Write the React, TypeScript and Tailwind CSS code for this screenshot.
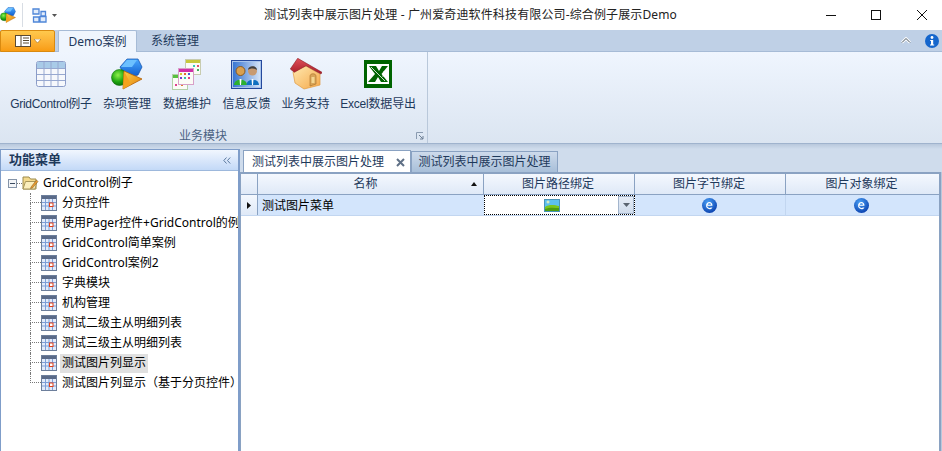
import { ReactNode } from "react";

const treeItems = [
  "分页控件",
  "使用Pager控件+GridControl的例子",
  "GridControl简单案例",
  "GridControl案例2",
  "字典模块",
  "机构管理",
  "测试二级主从明细列表",
  "测试三级主从明细列表",
  "测试图片列显示",
  "测试图片列显示（基于分页控件）",
];

const ShapesIcon = ({ size }: { size: number }) => (
  <svg width={size} height={size} viewBox="0 0 32 32">
    <defs>
      <linearGradient id="shapeBlue" x1="0" y1="0" x2="0" y2="1">
        <stop offset="0" stopColor="#4aa8ff" />
        <stop offset="1" stopColor="#0a55c8" />
      </linearGradient>
      <radialGradient id="shapeGreen" cx="0.4" cy="0.35" r="0.7">
        <stop offset="0" stopColor="#8ef04a" />
        <stop offset="0.6" stopColor="#1da510" />
        <stop offset="1" stopColor="#0a6a08" />
      </radialGradient>
      <linearGradient id="shapeOrange" x1="0" y1="0" x2="1" y2="1">
        <stop offset="0" stopColor="#ffd34a" />
        <stop offset="1" stopColor="#e07a08" />
      </linearGradient>
    </defs>
    <path d="M9 9 L16 1 L27 1 L31 9 L27 17 L15 20 Z" fill="url(#shapeBlue)" stroke="#0b4aa8" strokeWidth="0.7" />
    <path d="M10 9 L16 2 L26 2 L21 9 Z" fill="#6cc0ff" />
    <circle cx="8.5" cy="19.5" r="8" fill="url(#shapeGreen)" stroke="#0f6f0c" strokeWidth="0.6" />
    <path d="M13 13 L31 21 L12 31 Z" fill="url(#shapeOrange)" stroke="#b25f06" strokeWidth="0.8" />
    <path d="M13 13 L20 26.5 L12 31 Z" fill="#f3a21f" />
  </svg>
);

const GridIcon = () => (
  <svg width="30" height="27" viewBox="0 0 30 27">
    <rect x="0.5" y="0.5" width="29" height="25" rx="2" fill="#f6f8fc" stroke="#8b9cc8" />
    <rect x="1" y="1" width="28" height="6" fill="#a9cbe8" />
    <path d="M1 7.5H29M1 13.5H29M1 19.5H29M8 1V25M15 1V25M22 1V25" stroke="#97a8d0" fill="none" />
  </svg>
);

const MaintainIcon = () => {
  const card = (x: number, y: number, head: string, border: string, w: number, h: number) => (
    <g>
      <rect x={x + 0.5} y={y + 0.5} width={w} height={h} fill="#fbfcf6" stroke={border} />
      <rect x={x + 1} y={y + 1} width={w - 1} height="3" fill={head} />
    </g>
  );
  return (
    <svg width="30" height="31" viewBox="0 0 30 31">
      {card(13, 0, "#c8c83c", "#c8ccb0", 15, 15)}
      <rect x="21" y="6" width="2" height="2" fill="#34c8b4" />
      <rect x="25" y="6" width="2" height="2" fill="#e0506a" />
      <rect x="25" y="10" width="2" height="2" fill="#40b060" />
      {card(0, 15, "#58c040", "#b4d0a8", 15, 15)}
      <rect x="3" y="25" width="2" height="2" fill="#e04090" />
      <rect x="9" y="25" width="2" height="2" fill="#e08030" />
      {card(6, 9, "#d030a8", "#d8a0c8", 15, 16)}
      <rect x="8" y="14" width="2" height="2" fill="#d8c830" />
      <rect x="12" y="14" width="2" height="2" fill="#e07030" />
      <rect x="16" y="14" width="2" height="2" fill="#4060d8" />
      <rect x="8" y="18" width="2" height="2" fill="#7040d0" />
      <rect x="12" y="18" width="2" height="2" fill="#30c0b0" />
      <rect x="16" y="18" width="2" height="2" fill="#e04080" />
    </svg>
  );
};

const PeopleIcon = () => (
  <svg width="31" height="29" viewBox="0 0 31 29">
    <defs>
      <linearGradient id="peopleBg" x1="0" y1="0" x2="1" y2="0">
        <stop offset="0" stopColor="#2f6fd0" />
        <stop offset="1" stopColor="#dbe8f8" />
      </linearGradient>
    </defs>
    <rect x="0.5" y="0.5" width="30" height="28" fill="url(#peopleBg)" stroke="#24489c" />
    <rect x="1.5" y="1.5" width="28" height="26" fill="none" stroke="#a8c4ec" />
    <circle cx="9.5" cy="11" r="4.5" fill="#d9a050" stroke="#8a5a20" strokeWidth="1" />
    <path d="M3 25 C3 18 16 18 16 25 Z" fill="#2cb030" />
    <path d="M8.5 19 L10.5 19 L10 25 L9 25 Z" fill="#fff" />
    <circle cx="21.5" cy="11" r="4.5" fill="#c89a70" />
    <path d="M17 10 C17 5 26 5 26 10 C24 8 19 8 17 10 Z" fill="#404040" />
    <path d="M15.5 25 C15.5 18 28 18 28 25 Z" fill="#1070c0" />
    <path d="M20.5 19 L22.5 19 L22 25 L21 25 Z" fill="#fff" />
  </svg>
);

const HouseIcon = () => (
  <svg width="32" height="32" viewBox="0 0 32 32">
    <defs>
      <linearGradient id="houseWall" x1="0" y1="0" x2="1" y2="1">
        <stop offset="0" stopColor="#ffe9b0" />
        <stop offset="1" stopColor="#f5a84a" />
      </linearGradient>
      <linearGradient id="houseRoof" x1="0" y1="0" x2="0" y2="1">
        <stop offset="0" stopColor="#e0505a" />
        <stop offset="1" stopColor="#a81c28" />
      </linearGradient>
    </defs>
    <path d="M3 14 L16 8 L30 16 L30 27 L14 31 L5 25 Z" fill="url(#houseWall)" stroke="#e09a40" strokeWidth="0.7" />
    <path d="M7.7 0.3 L0.3 11 L4.3 14.3 L16 7.7 L31 16 L32 14.3 Z" fill="url(#houseRoof)" stroke="#8c1c24" strokeWidth="0.6" />
    <path d="M20 18 C20 15 26 15 26 18 L26 26 L20 28 Z" fill="#d8a458" stroke="#a87028" strokeWidth="0.6" />
    <rect x="21.5" y="19" width="3" height="6" fill="#f4d690" />
  </svg>
);

const ExcelIcon = () => (
  <svg width="28" height="28" viewBox="0 0 28 28">
    <rect width="28" height="28" fill="#006400" />
    <rect x="3" y="4" width="22" height="20" fill="#fff" />
    <path d="M5 6 H12 L15 11 L18 6 H24 L17.5 14 L24 22 H17 L14 17 L11 22 H4 L11 14 Z" fill="#006400" />
    <path d="M7 7 L21 21" stroke="#fff" strokeWidth="0.8" />
    <path d="M19 12H25M18 16H25" stroke="#fff" strokeWidth="0.8" />
  </svg>
);

const NodeIcon = () => (
  <svg width="16" height="16" viewBox="0 0 16 16" className="shrink-0">
    <rect x="0.5" y="0.5" width="15" height="15" fill="#e3ebfa" stroke="#6d7f9c" />
    <rect x="1" y="1" width="14" height="3" fill="#5a6a88" />
    <path d="M1 7.5H15M1 11H15M4.5 4V15M8 4V15M11.5 4V15" stroke="#7d9fd8" fill="none" />
    <rect x="8.5" y="8" width="3.5" height="3.5" fill="#fff" stroke="#e0401c" />
  </svg>
);

const FolderIcon = () => (
  <svg width="17" height="16" viewBox="0 0 17 16" className="shrink-0">
    <path d="M1 2 H7 L8.5 4 H14 V14 H1 Z" fill="#f3d98c" stroke="#9c8a4c" />
    <path d="M1 14 L3.5 6.5 H15 L13 14 Z" fill="#fbeebc" stroke="#a8965a" />
    <path d="M9 12 L14.5 5 L16 6.5 L10.5 13 L8.5 13.5 Z" fill="#e89a30" stroke="#7c5a20" strokeWidth="0.5" />
  </svg>
);

const PictureIcon = () => (
  <svg width="16" height="13" viewBox="0 0 16 13">
    <rect x="0.5" y="0.5" width="15" height="12" fill="#5cc0ee" stroke="#4a94b8" />
    <path d="M1 8 C5 5 11 6 15 7 V12 H1 Z" fill="#7cc61c" />
    <path d="M1 10 C6 8 11 9 15 9 V12 H1 Z" fill="#4c9c10" />
    <path d="M4 1.5V4.5M2.5 3H5.5" stroke="#fff8b0" strokeWidth="1" />
  </svg>
);

const IeIcon = () => (
  <svg width="15" height="15" viewBox="0 0 15 15">
    <defs>
      <radialGradient id="ieBall" cx="0.4" cy="0.3" r="0.8">
        <stop offset="0" stopColor="#4aa0f5" />
        <stop offset="1" stopColor="#0438a8" />
      </radialGradient>
    </defs>
    <circle cx="7.5" cy="7.5" r="7.5" fill="url(#ieBall)" />
    <path d="M4.5 7.8 H10.5 C10.6 5.2 9 4 7.5 4 C5.6 4 4 5.6 4 7.6 C4 9.7 5.6 11.2 7.6 11.2 C9 11.2 10 10.5 10.4 9.4 H8.6 C8.3 9.8 8 10 7.5 10 C6.5 10 5.8 9.4 5.7 8.8 Z M5.8 6.7 C6 5.8 6.7 5.3 7.4 5.3 C8.2 5.3 8.8 5.8 8.9 6.7 Z" fill="#fff" fillRule="evenodd" />
  </svg>
);

const RibbonButton = ({ icon, label, width }: { icon: ReactNode; label: string; width: string }) => (
  <div className={`flex flex-col items-center ${width}`}>
    <div className="flex h-[34px] items-center justify-center">{icon}</div>
    <span className="mt-[4px] whitespace-nowrap font-['Liberation_Sans','Noto_Sans_CJK_SC',sans-serif] leading-[18px]">{label}</span>
  </div>
);

const Connector = ({ last }: { last: boolean }) => (
  <div className="flex h-5 w-[11px] shrink-0 flex-col">
    <div className="h-[10px] border-b border-l border-dotted border-[#777]" />
    {!last && <div className="flex-1 border-l border-dotted border-[#777]" />}
  </div>
);

export default function App() {
  return (
    <div className="flex h-[451px] w-[942px] flex-col overflow-hidden bg-white font-['Noto_Sans','Noto_Sans_CJK_SC',sans-serif] text-[12px] text-[#1e395b]">
      {/* title bar */}
      <div className="flex h-[30px] shrink-0 items-center bg-white text-[#222]">
        <div className="flex w-[60px] shrink-0 items-center">
          <ShapesIcon size={16} />
          <div className="ml-[6px] h-[24px] w-px bg-[#d8dde4]" />
          <svg width="15" height="15" viewBox="0 0 15 15" className="ml-[9px]">
            <path d="M1 1H7V6H1Z M9 3.5H13.5V8H9Z M8 8.5H14V14H8Z M1.5 9H7V14H1.5Z" fill="#e3edfb" stroke="#4f86d8" strokeWidth="1.3" />
          </svg>
          <svg width="5" height="3" viewBox="0 0 5 3" className="ml-[5px]">
            <path d="M0 0H5L2.5 3Z" fill="#555" />
          </svg>
        </div>
        <div className="flex-1 pl-[62px] text-center tracking-[0.13px]">测试列表中展示图片处理 - 广州爱奇迪软件科技有限公司-综合例子展示Demo</div>
        <div className="flex w-[123px] shrink-0 items-center">
          <svg width="123" height="12" viewBox="0 0 123 12">
            <path d="M7 6.5H17" stroke="#111" />
            <rect x="52.5" y="1.5" width="9" height="9" fill="none" stroke="#111" />
            <path d="M98 1L108 11M108 1L98 11" stroke="#111" />
          </svg>
        </div>
      </div>

      {/* ribbon tabs */}
      <div className="flex h-[22px] shrink-0 items-end border-b border-[#a6bbd6] bg-[#bfd0e6]">
        <div className="mb-[-1px] flex h-[22px] w-[55px] items-center justify-center gap-[2px] rounded-t-[2px] border border-[#d98a10] bg-gradient-to-b from-[#ffc94d] to-[#f89c12]">
          <svg width="17" height="12" viewBox="0 0 17 12">
            <rect x="0.5" y="0.5" width="15" height="11" fill="#fff" stroke="#5c4a30" />
            <path d="M6 0.5V11.5" stroke="#5c4a30" />
            <path d="M8 3H14M8 5.5H14M8 8H14" stroke="#5c4a30" />
          </svg>
          <svg width="7" height="4" viewBox="0 0 7 4">
            <path d="M0 0H7L3.5 4Z" fill="#fff" stroke="#8a5a10" strokeWidth="0.5" />
          </svg>
        </div>
        <div className="mb-[-1px] ml-[3px] flex h-[22px] w-[79px] items-center justify-center rounded-t-[2px] border border-b-0 border-[#a6bbd6] bg-[#eff5fd]">Demo案例</div>
        <div className="flex h-[21px] items-center pl-[14px]">系统管理</div>
        <div className="flex-1" />
        <div className="flex items-center gap-[14px] self-center pr-[3px]">
          <svg width="10" height="7" viewBox="0 0 10 7">
            <path d="M1 5.5L5 1.5L9 5.5" fill="none" stroke="#fff" strokeWidth="2.6" />
            <path d="M1 5.5L5 1.5L9 5.5" fill="none" stroke="#44525f" strokeWidth="1" />
          </svg>
          <svg width="14" height="14" viewBox="0 0 14 14">
            <circle cx="7" cy="7" r="7" fill="#1566cc" />
            <circle cx="7" cy="3.5" r="1.4" fill="#fff" />
            <path d="M5.2 6H8.2V10.5H9.2V11.5H5V10.5H6V7H5.2Z" fill="#fff" />
          </svg>
        </div>
      </div>

      {/* ribbon body */}
      <div className="flex h-[92px] shrink-0 border-b border-[#9fb3cd] bg-gradient-to-b from-[#eff5fe] to-[#dbe5f1]">
        <div className="flex h-full w-[428px] shrink-0 flex-col border-r border-[#b9c8da]">
          <div className="flex pl-[9px] pt-[5px]">
            <RibbonButton icon={<GridIcon />} label="GridControl例子" width="w-[84px] tracking-[-0.3px]" />
            <RibbonButton icon={<ShapesIcon size={32} />} label="杂项管理" width="w-[60px] ml-[4px]" />
            <RibbonButton icon={<MaintainIcon />} label="数据维护" width="w-[60px]" />
            <RibbonButton icon={<PeopleIcon />} label="信息反馈" width="w-[59px]" />
            <RibbonButton icon={<HouseIcon />} label="业务支持" width="w-[59px]" />
            <RibbonButton icon={<ExcelIcon />} label="Excel数据导出" width="w-[78px] ml-[4px] tracking-[-0.2px]" />
          </div>
          <div className="mt-auto flex items-center">
            <span className="ml-[179px] leading-[14px] text-[#4a6182]">业务模块</span>
            <svg width="8" height="8" viewBox="0 0 8 8" className="ml-auto mr-[3px]">
              <path d="M0.5 7V0.5H7" fill="none" stroke="#8a9bb0" />
              <path d="M3 3L7 7M7 4V7H4" fill="none" stroke="#6d7f94" />
            </svg>
          </div>
        </div>
      </div>

      {/* body */}
      <div className="flex min-h-0 flex-1 flex-col">
        <div className="h-[5px] shrink-0 bg-gradient-to-b from-[#b8c8dc] to-[#cfdcec]" />
        <div className="flex min-h-0 flex-1">
          {/* left menu */}
          <div className="flex w-[240px] shrink-0 flex-col border-l border-r-2 border-t border-[#7f9dc9] text-black">
            <div className="flex h-[21px] shrink-0 items-center justify-between border-b border-[#9db8dc] bg-gradient-to-b from-[#f1f6fe] to-[#c3d9f7] pl-[8px] pr-[7px]">
              <span className="text-[13px] font-bold text-[#1e395b]">功能菜单</span>
              <svg width="8" height="7" viewBox="0 0 8 7">
                <path d="M3.5 0.5L0.8 3.5L3.5 6.5M7.2 0.5L4.5 3.5L7.2 6.5" fill="none" stroke="#5c7aa0" />
              </svg>
            </div>
            <div className="flex-1 overflow-hidden bg-white pt-[2px]">
              <div className="flex h-5 items-center pl-[7px]">
                <div className="flex h-[9px] w-[9px] shrink-0 items-center justify-center border border-[#8594a8] bg-[#f3f5f8]">
                  <div className="h-px w-[5px] bg-[#3a4a60]" />
                </div>
                <div className="h-0 w-[5px] shrink-0 border-b border-dotted border-[#777]" />
                <FolderIcon />
                <span className="ml-[4px] whitespace-nowrap">GridControl例子</span>
              </div>
              <div className="ml-[29px]">
                {treeItems.map((item, i) => (
                  <div key={item} className="flex h-5 items-center">
                    <Connector last={i === treeItems.length - 1} />
                    <NodeIcon />
                    <span className={`ml-[3px] whitespace-nowrap px-[2px] pb-[1px] leading-[18px] ${item === "测试图片列显示" ? "bg-[#e0e0e0]" : ""}`}>{item}</span>
                  </div>
                ))}
              </div>
            </div>
          </div>

          {/* main */}
          <div className="flex min-w-0 flex-1 flex-col bg-white">
            <div className="flex h-[23px] shrink-0 items-end bg-[#cfdcec] pl-[3px]">
              <div className="mb-[-1px] flex h-[23px] w-[168px] items-center border border-b-0 border-[#8aa2c2] bg-white pl-[8px] text-[#1e395b]">
                <span>测试列表中展示图片处理</span>
                <svg width="9" height="9" viewBox="0 0 9 9" className="ml-[12px]">
                  <path d="M1 1L8 8M8 1L1 8" stroke="#5f7086" strokeWidth="2" />
                </svg>
              </div>
              <div className="flex h-[21px] w-[147px] items-center justify-center border border-b-0 border-[#8aa2c2] bg-gradient-to-b from-[#cddaeb] to-[#a8bfd9]">测试列表中展示图片处理</div>
            </div>
            <div className="mr-px flex min-h-0 flex-1 flex-col border-r-2 border-l border-t-2 border-[#8aa2c2] shadow-[1px_0_0_#b9c8dc]">
              <div className="flex h-[21px] shrink-0 border-b border-[#8aa2c2] bg-gradient-to-b from-[#f4f8fe] to-[#dfe9f7]">
                <div className="w-[17px] shrink-0 border-r border-[#8aa2c2]" />
                <div className="flex w-[226px] shrink-0 items-center justify-center border-r border-[#8aa2c2] pl-[2px]">
                  <span className="flex-1 text-center">名称</span>
                  <svg width="6" height="4" viewBox="0 0 6 4" className="mr-[6px]">
                    <path d="M3 0L6 4H0Z" fill="#111" />
                  </svg>
                </div>
                <div className="flex w-[151px] shrink-0 items-center justify-center border-r border-[#8aa2c2] pr-[2px]">图片路径绑定</div>
                <div className="flex w-[151px] shrink-0 items-center justify-center border-r border-[#8aa2c2] pr-[2px]">图片字节绑定</div>
                <div className="flex flex-1 items-center justify-center pr-[2px]">图片对象绑定</div>
              </div>
              <div className="flex h-[21px] shrink-0 border-b border-[#c2d6f0] bg-[#d3e5fc] text-black">
                <div className="flex w-[17px] shrink-0 items-center justify-center border-r border-[#8aa2c2] bg-gradient-to-b from-[#f4f8fe] to-[#dfe9f7]">
                  <svg width="4" height="7" viewBox="0 0 4 7">
                    <path d="M0 0L4 3.5L0 7Z" fill="#111" />
                  </svg>
                </div>
                <div className="flex w-[226px] shrink-0 items-center pl-[4px] pt-[2px]">测试图片菜单</div>
                <div className="flex w-[151px] shrink-0 border border-dotted border-black bg-white">
                  <div className="flex flex-1 items-center justify-center">
                    <PictureIcon />
                  </div>
                  <div className="flex w-[16px] items-center justify-center border border-[#a3b5cd] bg-gradient-to-b from-[#e6edf7] to-[#d0dcec]">
                    <svg width="7" height="4" viewBox="0 0 7 4">
                      <path d="M0 0H7L3.5 4Z" fill="#5a6470" />
                    </svg>
                  </div>
                </div>
                <div className="flex w-[151px] shrink-0 items-center justify-center border-r border-[#c2d6f0] pr-[2px]">
                  <IeIcon />
                </div>
                <div className="flex flex-1 items-center justify-center pr-[2px]">
                  <IeIcon />
                </div>
              </div>
            </div>
          </div>
        </div>
      </div>
    </div>
  );
}
